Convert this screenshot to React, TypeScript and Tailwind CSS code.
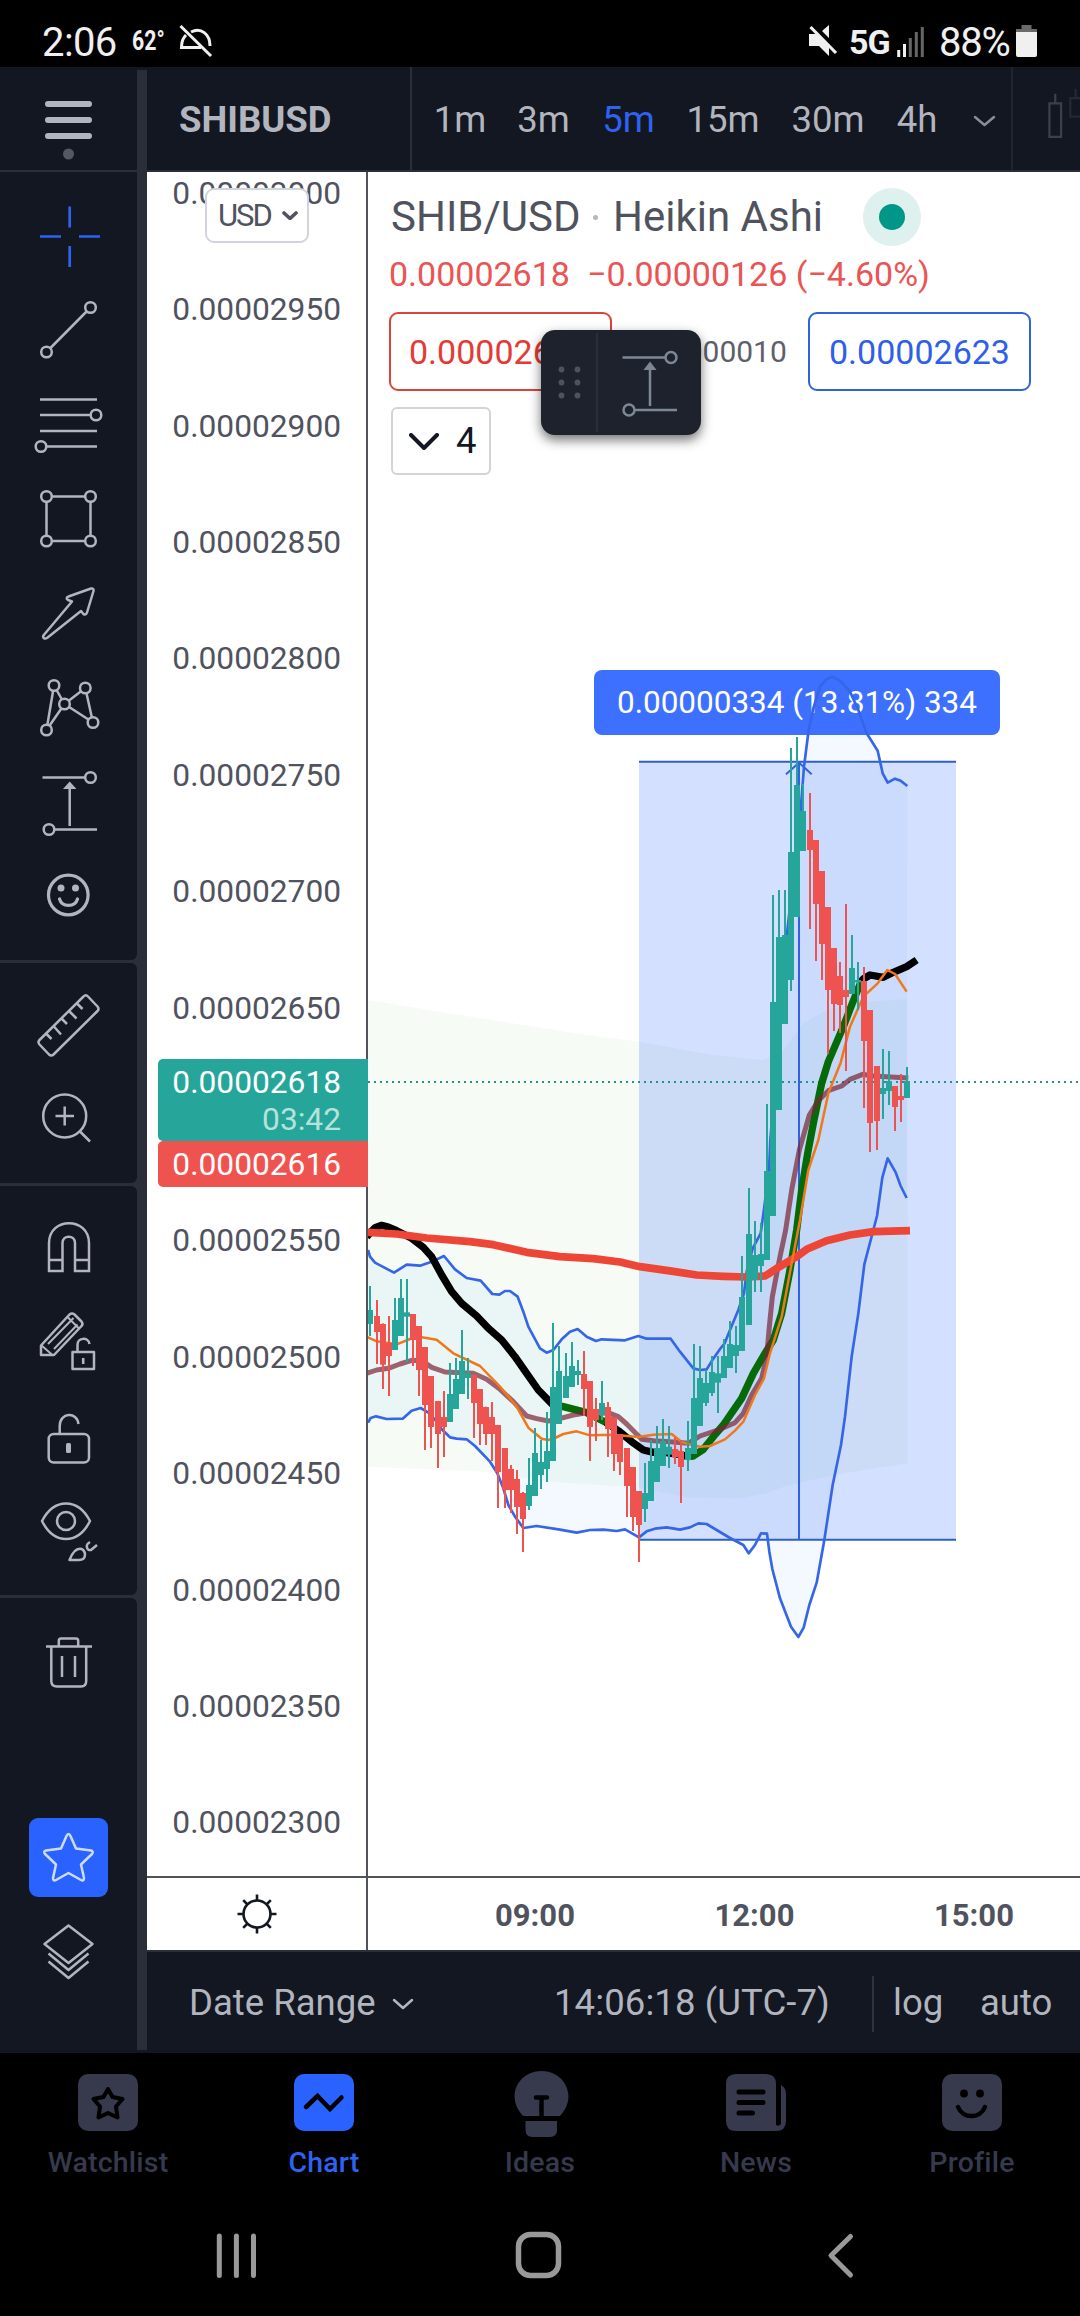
import React from "react";

type Candle = [x: number, high: number, low: number, top: number, bottom: number, up: 0 | 1];

const candles: Candle[] = [
  [30, 378, 528, 450, 492, 1], [51, 420, 612, 468, 516, 0], [69, 490, 687, 492, 614, 0],
  [87, 468, 708, 549, 588, 0], [105, 414, 570, 480, 570, 1], [123, 357, 528, 414, 528, 1],
  [141, 357, 606, 457, 470, 1], [159, 462, 618, 462, 540, 0], [177, 498, 708, 498, 630, 0],
  [195, 561, 870, 561, 735, 0], [213, 648, 864, 648, 801, 0], [234, 723, 924, 723, 822, 0],
  [252, 693, 891, 771, 801, 0], [270, 609, 786, 702, 786, 1], [288, 594, 747, 657, 747, 1],
  [306, 510, 702, 603, 702, 1], [324, 594, 717, 640, 654, 1], [342, 645, 834, 645, 729, 0],
  [360, 687, 855, 687, 792, 0], [378, 740, 855, 741, 822, 0], [396, 726, 903, 771, 822, 0],
  [414, 795, 1044, 795, 936, 0], [435, 864, 1044, 864, 990, 0], [453, 915, 1059, 927, 990, 0],
  [471, 930, 1122, 957, 1041, 0], [489, 996, 1176, 999, 1077, 0], [507, 894, 1050, 975, 1038, 1],
  [525, 804, 1008, 879, 1008, 1], [543, 840, 987, 906, 945, 1], [561, 756, 966, 873, 927, 1],
  [579, 489, 903, 681, 903, 1], [597, 558, 792, 633, 792, 1], [618, 579, 714, 648, 714, 1],
  [636, 546, 681, 618, 681, 1], [654, 600, 675, 633, 645, 1], [672, 573, 768, 642, 687, 0],
  [690, 663, 903, 663, 801, 0], [708, 714, 843, 747, 780, 0], [726, 663, 780, 729, 765, 1],
  [744, 726, 891, 741, 807, 0], [762, 771, 933, 771, 882, 0], [780, 822, 945, 822, 906, 0],
  [801, 864, 1071, 864, 978, 0], [819, 921, 1113, 921, 1071, 0], [837, 993, 1206, 993, 1095, 0],
  [855, 909, 1086, 999, 1047, 1], [873, 840, 1023, 903, 1023, 1], [891, 798, 966, 864, 966, 1],
  [909, 777, 918, 843, 918, 1], [927, 798, 924, 860, 884, 1], [945, 832, 912, 867, 891, 0],
  [963, 840, 1029, 873, 921, 0], [984, 783, 933, 864, 900, 1], [1002, 552, 882, 714, 882, 1],
  [1020, 558, 798, 654, 798, 1], [1038, 630, 738, 669, 729, 1], [1056, 588, 708, 636, 699, 1],
  [1074, 588, 759, 640, 668, 1], [1092, 537, 654, 588, 654, 1], [1110, 483, 624, 552, 624, 1],
  [1128, 498, 639, 555, 588, 1], [1146, 288, 573, 411, 573, 1], [1167, 84, 495, 222, 495, 1],
  [1185, 183, 396, 285, 360, 1], [1203, 189, 396, 282, 318, 1], [1221, -168, 300, 33, 300, 1],
  [1239, -795, 168, -474, 168, 1], [1257, -810, -150, -669, -150, 1], [1275, -810, -408, -675, -408, 1],
  [1293, -1236, -507, -924, -540, 1], [1311, -1269, -729, -1125, -729, 1], [1329, -1128, -927, -1047, -927, 1],
  [1350, -1101, -693, -990, -930, 0], [1368, -960, -597, -960, -768, 0], [1386, -867, -540, -867, -648, 0],
  [1404, -759, -318, -759, -510, 0], [1422, -636, -387, -636, -468, 0], [1440, -594, -381, -552, -465, 0],
  [1458, -768, -267, -510, -489, 0], [1476, -675, -498, -576, -498, 1], [1494, -594, -450, -540, -533, 1],
  [1512, -579, -156, -537, -357, 0], [1530, -450, -24, -450, -111, 0], [1551, -282, -30, -282, -117, 0],
  [1569, -333, -123, -216, -198, 1], [1587, -327, -165, -237, -207, 1], [1605, -222, -87, -222, -159, 0],
  [1623, -258, -114, -192, -180, 0], [1641, -279, -186, -237, -186, 1],
];

const upperBand =
  "24,270 30,290 45,308 72,322 102,338 140,314 180,317 215,305 252,288 285,328 320,354 362,362 397,402 418,404 435,393 450,393 473,410 490,455 505,500 540,565 560,578 580,570 605,538 630,515 653,507 680,530 708,543 725,538 795,541 835,528 860,536 932,536 960,575 1000,625 1020,630 1040,628 1060,596 1080,567 1094,550 1110,510 1135,450 1152,400 1160,335 1178,265 1202,220 1211,155 1227,30 1231,-60 1280,-670 1322,-1050 1332,-1180 1346,-1290 1360,-1355 1380,-1420 1400,-1443 1417,-1450 1440,-1438 1470,-1405 1495,-1350 1520,-1280 1553,-1228 1568,-1160 1583,-1132 1605,-1144 1622,-1138 1642,-1122";
const lowerBand =
  "24,788 32,774 48,769 80,777 128,776 155,752 182,744 205,758 230,785 245,808 270,832 290,836 320,838 345,858 390,905 412,940 430,985 445,1035 465,1070 490,1104 530,1098 600,1109 650,1118 690,1110 730,1109 770,1113 795,1108 837,1132 860,1114 885,1106 920,1102 960,1109 990,1102 1015,1090 1040,1092 1080,1116 1110,1134 1150,1155 1166,1180 1185,1155 1203,1120 1221,1121 1228,1175 1237,1227 1260,1315 1293,1400 1315,1431 1331,1403 1348,1335 1370,1268 1393,1140 1418,975 1443,855 1455,770 1475,590 1495,460 1513,313 1551,168 1567,53 1583,-5 1607,37 1622,78 1640,114";
const lowerBandReversed = lowerBand.split(" ").reverse().join(" ");
const channel =
  "24,-480 240,-445 660,-378 838,-355 1060,-315 1210,-300 1270,-330 1330,-410 1400,-450 1500,-473 1643,-482 1643,910 1480,935 1380,955 1270,980 1220,1000 1140,1015 990,1013 836,982 560,965 380,935 24,920";
const slowBlackA =
  "20,230 45,203 65,196 85,201 110,212 155,235 190,262 215,290 245,345 275,395 305,430 350,468 385,505 425,540 465,590 500,640 535,690 578,734";
const slowGreenA = "575,732 610,740 680,758 740,788";
const slowBlackB = "738,787 775,812 815,845 850,870 880,877 910,876 950,882 987,890";
const slowGreenB =
  "985,890 1000,888 1030,868 1060,830 1090,795 1145,715 1180,640 1215,580 1240,540 1265,460 1290,330 1310,210 1325,90 1343,-20 1360,-110 1385,-230 1405,-295 1450,-400 1475,-465 1505,-540";
const slowBlackC = "1502,-534 1510,-543 1530,-555 1570,-548 1600,-563 1640,-580 1670,-600";
const redAverage =
  "20,217 110,222 200,234 330,245 400,254 500,277 600,290 700,296 780,306 840,320 940,334 1010,345 1090,349 1160,351 1215,348 1225,342 1250,325 1310,290 1340,268 1400,242 1470,225 1540,215 1650,212";
const brownAverage =
  "20,640 50,630 85,625 120,612 155,601 185,602 215,622 255,636 340,640 380,658 420,688 460,725 500,768 530,776 565,783 590,778 640,765 680,758 750,760 775,770 800,792 845,838 880,842 940,846 985,850 1020,828 1080,808 1125,788 1150,760 1175,705 1205,655 1220,590 1228,500 1237,410 1260,290 1277,210 1295,90 1318,-30 1348,-135 1375,-178 1405,-208 1445,-222 1470,-242 1508,-257 1540,-252 1645,-246";
const orangeAverage =
  "20,530 50,544 110,553 150,537 185,532 230,539 280,580 360,618 420,680 470,740 505,803 545,836 565,840 585,834 610,822 650,814 690,826 760,824 835,831 880,824 935,822 965,846 985,852 1020,860 1050,858 1095,838 1125,812 1150,785 1185,705 1212,655 1230,580 1265,470 1295,310 1320,180 1345,30 1375,-60 1405,-200 1442,-292 1470,-400 1510,-490 1553,-530 1582,-570 1605,-558 1640,-505";

function PriceChart() {
  return (
    <svg viewBox="368 172 712 1704" width="712" height="1704" className="block" fill="none">
      <g transform="translate(360 1160) scale(0.333333)">
        <polygon points={channel} fill="#4caf50" fillOpacity="0.05" />
        <polygon points={`${upperBand} ${lowerBandReversed}`} fill="#2196f3" fillOpacity="0.055" />
        <rect x="837" y="-1195" width="951" height="2333" fill="#2962ff" fillOpacity="0.2" />
        <path d="M837-1195H1788M837 1139H1788" stroke="#2f5fc4" strokeWidth="6" />
        <path d="M1317 1138V-1190M1278-1157L1317-1192L1355-1157" stroke="#2f62e8" strokeWidth="6" />
      </g>
      <rect x="594" y="670" width="406" height="65" rx="8" fill="#3d70ff" />
      <text x="617" y="713" fill="#fff" className="font-[Roboto,sans-serif] text-[31.5px]" textLength="360">
        0.00000334 (13.81%) 334
      </text>
      <path d="M368 1082H1080" stroke="#26908a" strokeWidth="2" strokeDasharray="2 4" />
      <g transform="translate(360 1160) scale(0.333333)" strokeLinejoin="round">
        <polyline points={upperBand} stroke="#3566e8" strokeWidth="8" />
        <polyline points={lowerBand} stroke="#3566e8" strokeWidth="8" />
        <g strokeWidth="22">
          <polyline points={slowBlackA} stroke="#000" />
          <polyline points={slowGreenA} stroke="#056b08" />
          <polyline points={slowBlackB} stroke="#000" />
          <polyline points={slowGreenB} stroke="#056b08" />
          <polyline points={slowBlackC} stroke="#000" />
        </g>
        <polyline points={brownAverage} stroke="#7b2433" strokeOpacity="0.7" strokeWidth="15" />
        <polyline points={redAverage} stroke="#ee4636" strokeWidth="23" />
        <polyline points={orangeAverage} stroke="#f0781a" strokeWidth="7.5" />
        {candles.map(([x, high, low, top, bottom, up]) => (
          <g key={x} fill={up ? "#26a69a" : "#ef5350"}>
            <rect x={x - 3} y={high} width="6" height={low - high} />
            <rect x={x - 9} y={top} width="18" height={bottom - top} />
          </g>
        ))}
      </g>
    </svg>
  );
}

function Tool({ y, h, children }: { y: number; h: number; children: React.ReactNode }) {
  return (
    <svg
      viewBox={`0 ${y} 137 ${h}`}
      width="137"
      height={h}
      className="block shrink-0"
      fill="none"
      stroke="#b2b5be"
      strokeWidth="2.5"
      strokeLinejoin="round"
    >
      {children}
    </svg>
  );
}

function Node({ x, y }: { x: number; y: number }) {
  return <circle cx={x} cy={y} r="5.3" fill="#131722" />;
}

function Sidebar() {
  return (
    <aside className="flex w-[137px] shrink-0 flex-col bg-[#2a2e39]">
      <div className="flex h-[103px] flex-col bg-[#131722]">
        <Tool y={67} h={103}>
          <path d="M48 104H89M48 120H89M48 136H89" strokeWidth="6" strokeLinecap="round" />
          <circle cx="68.5" cy="154" r="5.5" fill="#555862" stroke="none" />
        </Tool>
      </div>
      <div className="mt-0.5 flex h-[788px] flex-col rounded-br-[6px] bg-[#131722] pt-[17px]">
        <Tool y={189} h={94}>
          <path d="M40 236.5H61M79 236.5H100M69.7 206.5V227.5M69.7 246V267" stroke="#2e63f2" strokeWidth="2.7" />
        </Tool>
        <Tool y={283} h={94}>
          <path d="M46.5 352L90.5 307.5" />
          <Node x={90.5} y={307.5} />
          <Node x={46.5} y={352} />
        </Tool>
        <Tool y={377} h={94}>
          <path d="M40 399.5H97M40 415H91M40 431H97M46 446.5H97" />
          <Node x={96} y={415} />
          <Node x={41} y={446.5} />
        </Tool>
        <Tool y={471} h={94}>
          <path d="M46.5 496.5H90.5V541H46.5Z" />
          <Node x={46.5} y={496.5} />
          <Node x={90.5} y={496.5} />
          <Node x={46.5} y={541} />
          <Node x={90.5} y={541} />
        </Tool>
        <Tool y={565} h={95}>
          <path d="M43.8 635L72 601.5L68 600C66 599 66.5 597 68.5 596.5L91 588.5C93 588 94 589.5 93.5 591L87 612.5C86.3 615 84 615 83 613.5L81 611L47 638C44.5 639.5 42 637.5 43.8 635Z" />
        </Tool>
        <Tool y={660} h={95}>
          <path d="M46.5 730L54 685.5L64.5 704L85.3 688L93 722.5L64.5 704L46.5 730Z" />
          <Node x={54} y={685.5} />
          <Node x={85.3} y={688} />
          <Node x={64.5} y={704} />
          <Node x={46.5} y={730} />
          <Node x={93} y={722.5} />
        </Tool>
        <Tool y={755} h={95}>
          <path d="M42.5 777.5H85M55 829.5H97M69.7 826V786" />
          <path d="M63 789L69.7 781.5L76.5 789Z" fill="#b2b5be" stroke="none" />
          <Node x={90.5} y={777.5} />
          <Node x={49} y={829.5} />
        </Tool>
        <Tool y={850} h={94}>
          <circle cx="68.3" cy="895" r="19.8" strokeWidth="3.2" />
          <g fill="#b2b5be" stroke="none">
            <circle cx="61" cy="888" r="3.5" />
            <circle cx="75.5" cy="888" r="3.5" />
          </g>
          <path d="M59.5 899C62 907.5 75 907.5 77.5 899" strokeWidth="3.2" strokeLinecap="round" />
        </Tool>
      </div>
      <div className="mt-[3px] flex h-[220px] flex-col rounded-r-[6px] bg-[#131722] pt-[15px]">
        <Tool y={978} h={93}>
          <path d="M83.5 996.5Q85.8 994 88 996.5L97.5 1006.5Q99.5 1009 97.5 1011L53.5 1054.5Q51.3 1056.5 49 1054.5L39.5 1044.5Q37.5 1042 39.5 1040Z" />
          <path d="M46 1033.5L51.5 1039M53.5 1026L61 1034.5M61.5 1018.5L67 1024M69 1011L76.5 1018.5M77 1003.5L82.5 1009" />
        </Tool>
        <Tool y={1071} h={93}>
          <circle cx="64.7" cy="1116" r="21.5" />
          <path d="M55.5 1116H74M64.7 1106.5V1125.5M79.5 1131L90 1141.5" />
        </Tool>
      </div>
      <div className="mt-[3px] flex h-[409px] flex-col rounded-r-[6px] bg-[#131722] pt-[13px]">
        <Tool y={1199} h={95}>
          <path
            d="M49 1271V1243C49 1216.5 89 1216.5 89 1243V1271H75V1243C75 1234.5 62.5 1234.5 62.5 1243V1271ZM49 1260H62.5M75 1260H89"
            strokeLinejoin="miter"
          />
        </Tool>
        <Tool y={1294} h={95}>
          <path d="M41 1345.5L69.5 1314.5Q72 1312.5 74.5 1314.5L81.5 1321.5Q83.500 1324 81.5 1326L54 1355H41Z" />
          <path d="M41 1345L53 1355.5M48 1344L73.5 1318M54 1349L77.5 1324.5M67.500 1317L79 1328.5" strokeWidth="2" />
          <path d="M72.5 1352H94V1369H72.5ZM77.5 1352V1345C77.5 1337 88.5 1337 89.5 1344" fill="#131722" />
          <path d="M83.2 1358V1364" strokeWidth="2.6" />
        </Tool>
        <Tool y={1389} h={92}>
          <rect x="48.7" y="1434" width="40.3" height="28.5" rx="5" />
          <path d="M59.7 1434V1426C59.7 1412.5 77 1411 78.5 1424" />
          <rect x="66" y="1443" width="5" height="10" rx="1.5" fill="#b2b5be" stroke="none" />
        </Tool>
        <Tool y={1481} h={92}>
          <path d="M42 1521C54 1497.5 78 1497.5 90 1521C78 1545 54 1545 42 1521Z" />
          <circle cx="66" cy="1521" r="9" />
          <path d="M69.5 1560C73 1551 77 1548 81.5 1549C86 1551 87 1560 79 1560ZM90 1542C84.5 1545 87 1551 91 1550L97 1545" />
        </Tool>
      </div>
      <div className="mt-[3px] flex h-[455px] flex-col rounded-tr-[6px] bg-[#131722] pt-[20px]">
        <Tool y={1618} h={90}>
          <path d="M46 1646.5H92M58.8 1646V1641Q58.8 1638.5 61 1638.5H76Q78.2 1638.5 78.2 1641V1646M51.3 1647V1681Q51.3 1686.5 57 1686.5H81Q86.2 1686.5 86.2 1681V1647M62 1656V1677M75 1656V1677" />
        </Tool>
        <div className="mt-[110px] ml-[29px] flex h-[79px] w-[79px] items-center justify-center rounded-[9px] bg-[#2962ff]">
          <svg viewBox="29 1818 79 79" width="79" height="79" fill="none" stroke="#cfdcff" strokeWidth="2.5" strokeLinejoin="round">
            <path d="M66.5 1836Q68.5 1832 70.5 1836L76 1848.5L91 1850.5Q94 1851.5 92 1854L81 1864.5L84 1878Q84 1881.5 81 1880L68.5 1873L56 1880Q53 1881.5 53 1878L56 1864.5L45 1854Q43 1851.5 46 1850.5L61 1848.5Z" />
          </svg>
        </div>
        <Tool y={1897} h={100}>
          <path d="M68.5 1925.5L92.5 1944L68.5 1963L44.5 1944ZM48.5 1953.5L68.5 1970L88.5 1953.5M48.5 1961.5L68.5 1978L88.5 1961.5" />
        </Tool>
      </div>
    </aside>
  );
}

function Chevron({ w, h, stroke, sw }: { w: number; h: number; stroke: string; sw: number }) {
  return (
    <svg width={w + 4} height={h + 4} viewBox={`-2 -2 ${w + 4} ${h + 4}`} fill="none" className="block shrink-0">
      <path d={`M0 0L${w / 2} ${h}L${w} 0`} stroke={stroke} strokeWidth={sw} strokeLinecap="round" strokeLinejoin="round" />
    </svg>
  );
}

function StatusBar() {
  return (
    <div className="relative flex h-[67px] items-center bg-black text-[#f0f0f0]">
      <span className="ml-[42px] mt-[18px] w-[90px] text-[40px] leading-none tracking-[-0.6px]">2:06</span>
      <span className="mt-[14px] w-[46px] origin-left scale-x-[0.76] text-[28px] font-bold leading-none">62°</span>
      <svg width="36" height="36" viewBox="178 23 36 36" className="mt-[15px]" fill="none" stroke="#f0f0f0" strokeWidth="3">
        <path d="M186 35C181 40 182 43 181.5 47.5H201M191 32C201 27 210 34 210 46" />
        <path d="M180.5 26L211 56" />
      </svg>
      <svg width="32" height="36" viewBox="807 22 32 36" className="ml-[593px] mt-[13px]" fill="#f0f0f0">
        <path d="M809 34H816L829 47V56L819 46H809ZM822 31L829 25V38Z" />
        <path d="M810.5 27L836 53" stroke="#f0f0f0" strokeWidth="3.2" />
      </svg>
      <span className="ml-[10px] mt-[16px] w-[48px] text-[34px] font-bold leading-none tracking-[-1px]">5G</span>
      <svg width="28" height="32" viewBox="898 26 28 32" className="mt-[16px]">
        <path d="M899.7 50V57M905.5 44V57" stroke="#f0f0f0" strokeWidth="3" />
        <path d="M911.3 38V57M917.3 32V57M923.3 27V57" stroke="#666" strokeWidth="3" />
      </svg>
      <span className="ml-[14px] mt-[18px] w-[77px] text-[40px] leading-none tracking-[-1.2px]">88%</span>
      <svg width="22" height="34" viewBox="1017 24 22 34" className="mt-[15px]">
        <path d="M1022.5 25H1032.5V29H1038V32H1017V29H1022.5Z" fill="#6a6a6a" />
        <path d="M1017 32H1038V55Q1038 57 1036 57H1019Q1017 57 1017 55Z" fill="#f0f0f0" />
      </svg>
    </div>
  );
}

function Header() {
  return (
    <header className="flex h-[105px] shrink-0 items-center overflow-hidden border-b-2 border-[#2a2e39] bg-[#131722] text-[36.5px] leading-none text-[#b2b5be]">
      <div className="flex h-full w-[265px] items-center border-r-2 border-[#2a2e39] pl-[32px] pt-1 font-bold">SHIBUSD</div>
      <div className="flex h-full flex-1 items-center pt-1 text-center">
        <span className="w-[96px]">1m</span>
        <span className="w-[71px]">3m</span>
        <span className="w-[99px] text-[#2e63f2]">5m</span>
        <span className="w-[90px]">15m</span>
        <span className="w-[120px]">30m</span>
        <span className="w-[58px]">4h</span>
        <span className="ml-[27px]">
          <Chevron w={19} h={8} stroke="#8a8d97" sw={2.5} />
        </span>
      </div>
      <svg width="69" height="103" viewBox="1011 67 69 103" fill="none" className="block shrink-0 border-l-2 border-[#20242f]" strokeWidth="2.3">
        <path d="M1048.5 103H1060.5V137.5H1048.5ZM1054.5 93V103" stroke="#3d404a" />
        <path d="M1082 97.5H1070V116.5H1082M1075.5 88V97" stroke="#252934" />
      </svg>
    </header>
  );
}

const prices = ["3000", "2950", "2900", "2850", "2800", "2750", "2700", "2650", "", "2550", "2500", "2450", "2400", "2350", "2300"];

function PriceAxis() {
  return (
    <div className="relative h-[1704px] w-[221px] shrink-0 overflow-hidden border-r-2 border-[#50535e] text-[31.7px] leading-none text-[#50535e]">
      <div className="-mt-[36.5px] flex flex-col">
        {prices.map((p, i) => (
          <div key={i} className="flex h-[116.4px] shrink-0 items-center justify-end pr-[25px]">
            {p && `0.0000${p}`}
          </div>
        ))}
      </div>
      <div className="absolute left-[58px] top-[16px] flex h-[55px] w-[104px] items-center rounded-[9px] border-2 border-[#d1d4dc] bg-white pl-[11px] text-[31px] tracking-[-2px]">
        <span className="mr-[11px]">USD</span>
        <Chevron w={12} h={5.5} stroke="#50535e" sw={3.6} />
      </div>
    </div>
  );
}

function PriceTags() {
  return (
    <div className="absolute left-[11px] top-[887px] w-[210px] text-right text-[31.7px] leading-none text-white">
      <div className="h-[82px] rounded-l-[5px] bg-[#26a69a] pr-[27px] pt-[8px]">
        <div>0.00002618</div>
        <div className="mt-[5px] text-[#b5e2dd]">03:42</div>
      </div>
      <div className="h-[46px] rounded-l-[5px] bg-[#ef5350] pr-[27px] pt-[8px]">0.00002616</div>
    </div>
  );
}

function Legend() {
  return (
    <div className="absolute left-[242px] top-0 flex flex-col items-start leading-none">
      <div className="mt-[16px] flex h-[58px] items-center text-[42px] text-[#50535e]">
        <span className="ml-[2px] w-[202px] whitespace-nowrap">SHIB/USD</span>
        <span className="h-[5px] w-[5px] rounded-full bg-[#b5b7bd]" />
        <span className="ml-[15px] w-[250px] whitespace-nowrap">Heikin Ashi</span>
        <span className="flex h-[58px] w-[58px] items-center justify-center rounded-full bg-[#dff1ee]">
          <span className="h-[26px] w-[26px] rounded-full bg-[#009688]" />
        </span>
      </div>
      <div className="mt-[11px] flex h-[34px] items-center whitespace-nowrap text-[34px] text-[#ea5454]">
        <span className="mr-[17px]">0.00002618</span>
        <span>−0.00000126 (−4.60%)</span>
      </div>
      <div className="mt-[21px] flex h-[79px] items-center">
        <div className="flex h-[79px] w-[223px] items-center justify-center rounded-[9px] border-2 border-[#d9443c] pr-[2px] text-[34px] text-[#e53935]">
          0.00002613
        </div>
        <div className="w-[196px] pr-[6px] text-center text-[30px] text-[#5d606b]">0.00000010</div>
        <div className="flex h-[79px] w-[223px] items-center justify-center rounded-[9px] border-2 border-[#3162dd] text-[34px] text-[#2e5fe8]">
          0.00002623
        </div>
      </div>
      <div className="ml-[2px] mt-[16px] flex h-[68px] w-[100px] items-center rounded-[6px] border-2 border-[#d3d4d6] pl-[16px] text-[36.5px] text-[#131722]">
        <Chevron w={26} h={13} stroke="#131722" sw={4} />
        <span className="ml-[17px]">4</span>
      </div>
      <div className="absolute left-[152px] top-[158px] flex h-[105px] w-[160px] rounded-[14px] bg-[#1e222d] shadow-[0_5px_12px_rgba(0,0,0,0.55)]">
        <svg width="160" height="105" viewBox="541 330 160 105" fill="none" className="block">
          <path d="M597 333V432" stroke="#2a2e39" strokeWidth="2" />
          <g fill="#50535e">
            {[369.5, 382.5, 395.5].map((y) => (
              <g key={y}>
                <circle cx="561.5" cy={y} r="2.9" />
                <circle cx="577.5" cy={y} r="2.9" />
              </g>
            ))}
          </g>
          <g stroke="#7d8896" strokeWidth="2.5">
            <path d="M622.5 357.5H665M635 410H677M650 406V368" />
            <circle cx="671" cy="357.5" r="5.500" />
            <circle cx="629" cy="410" r="5.500" />
          </g>
          <path d="M643.5 370L650 361.5L656.5 370Z" fill="#7d8896" />
        </svg>
      </div>
    </div>
  );
}

function TimeAxis() {
  return (
    <div className="flex h-[76px] shrink-0 overflow-hidden border-t-2 border-b-2 border-t-[#50535e] border-b-[#2a2e39] bg-white text-[31px] font-bold leading-none text-[#50535e]">
      <div className="flex w-[221px] shrink-0 items-center justify-center border-r-2 border-[#50535e]">
        <svg width="42" height="42" viewBox="-21 -21 42 42" fill="none" stroke="#131722" strokeWidth="2.6">
          <circle r="13.5" />
          <path d="M0-19.5V-14M0 19.5V14M-19.5 0H-14M19.5 0H14M-13.8-13.8L-9.5-9.5M13.8-13.8L9.5-9.5M-13.8 13.8L-9.5 9.5M13.8 13.8L9.5 9.5" />
        </svg>
      </div>
      <div className="flex shrink-0 items-center pl-[57px] pt-[2px] text-center">
        <span className="w-[220px]">09:00</span>
        <span className="w-[219px]">12:00</span>
        <span className="w-[220px]">15:00</span>
      </div>
    </div>
  );
}

function RangeBar() {
  return (
    <div className="flex h-[101px] shrink-0 items-center whitespace-nowrap bg-[#131722] pt-[2px] text-[36.5px] leading-none text-[#b2b5be]">
      <span className="ml-[42px] w-[203px] shrink-0">Date Range</span>
      <Chevron w={18} h={8} stroke="#b2b5be" sw={2.5} />
      <span className="ml-[140px] w-[318px] shrink-0 tracking-[0.1px]">14:06:18 (UTC-7)</span>
      <span className="h-[56px] w-[2px] bg-[#2f3340]" />
      <span className="ml-[19px] w-[87px] shrink-0">log</span>
      <span>auto</span>
    </div>
  );
}

const tabs = [
  {
    label: "Watchlist",
    icon: (
      <>
        <rect x="78" y="2074" width="60" height="57" rx="10" />
        <path d="M108 2089L112.5 2097L122.5 2099L116 2106.5L117.5 2117.5L108 2113L98.5 2117.5L100 2106.5L93.5 2099L103.5 2097Z" fill="none" stroke="#000" strokeWidth="4" strokeLinejoin="round" />
      </>
    ),
    x: 0,
  },
  {
    label: "Chart",
    icon: (
      <>
        <rect x="294" y="2074" width="60" height="57" rx="10" />
        <path d="M306 2107L317.5 2096L330 2109L341.5 2097.5" fill="none" stroke="#000" strokeWidth="4.5" strokeLinecap="round" />
      </>
    ),
    x: 216,
  },
  {
    label: "Ideas",
    icon: (
      <>
        <path d="M523 2116C505 2097 518 2071 541.5 2071C565 2071 578 2097 560 2116ZM525.5 2121H557V2130Q557 2137 550 2137H532.5Q525.5 2137 525.5 2130Z" />
        <path d="M536 2097.5H547M541.5 2097.5V2117" stroke="#000" strokeWidth="4.5" strokeLinecap="round" />
      </>
    ),
    x: 432,
  },
  {
    label: "News",
    icon: (
      <>
        <path d="M736 2074H766Q776 2074 776 2084V2125Q779 2127 781 2124V2085Q786 2088 786 2094V2121Q786 2131 776 2131H736Q726 2131 726 2121V2084Q726 2074 736 2074Z" />
        <path d="M739 2092H763M739 2102.5H763M739 2113H752.5" stroke="#000" strokeWidth="5" strokeLinecap="round" />
      </>
    ),
    x: 648,
  },
  {
    label: "Profile",
    icon: (
      <>
        <rect x="942" y="2074" width="60" height="57" rx="10" />
        <g fill="#000">
          <circle cx="964" cy="2093.5" r="3.9" />
          <circle cx="980" cy="2093.5" r="3.9" />
        </g>
        <path d="M958 2107C963 2119 980 2119 985 2107" fill="none" stroke="#000" strokeWidth="4.5" strokeLinecap="round" />
      </>
    ),
    x: 864,
  },
];

function TabBar() {
  return (
    <nav className="flex h-[147px] text-[28.5px] font-medium leading-none">
      {tabs.map((t) => (
        <div
          key={t.label}
          className={
            t.label === "Chart"
              ? "flex w-[216px] flex-col items-center fill-[#2962ff] text-[#2e63f2]"
              : "flex w-[216px] flex-col items-center fill-[#363a4c] text-[#363a4c]"
          }
        >
          <svg width="216" height="90" viewBox={`${t.x} 2053 216 90`} className="block">
            {t.icon}
          </svg>
          <span className="mt-[6px] tracking-[0.2px]">{t.label}</span>
        </div>
      ))}
    </nav>
  );
}

function SystemNav() {
  return (
    <div className="h-[116px]">
      <svg width="1080" height="116" viewBox="0 2200 1080 116" fill="none" stroke="#999" className="block">
        <path d="M219.3 2236V2275.5M236.4 2236V2275.5M253.5 2236V2275.5" strokeWidth="5" strokeLinecap="round" />
        <rect x="518.5" y="2234.5" width="40" height="41" rx="12" strokeWidth="5.5" />
        <path d="M850.5 2236.5L831 2255.5L850.5 2275" strokeWidth="5" strokeLinecap="round" strokeLinejoin="round" />
      </svg>
    </div>
  );
}

export default function App() {
  return (
    <div className="h-[2316px] w-[1080px] overflow-hidden bg-black font-[Roboto,sans-serif]">
      <StatusBar />
      <div className="flex h-[1986px] bg-[#131722]">
        <Sidebar />
        <div className="mt-[3px] h-[1980px] w-[10px] shrink-0 bg-[#2a2e39]" />
        <main className="flex w-[933px] flex-col">
          <Header />
          <section className="relative flex h-[1704px] shrink-0 bg-white">
            <PriceAxis />
            <PriceChart />
            <PriceTags />
            <Legend />
          </section>
          <TimeAxis />
          <RangeBar />
        </main>
      </div>
      <TabBar />
      <SystemNav />
    </div>
  );
}
